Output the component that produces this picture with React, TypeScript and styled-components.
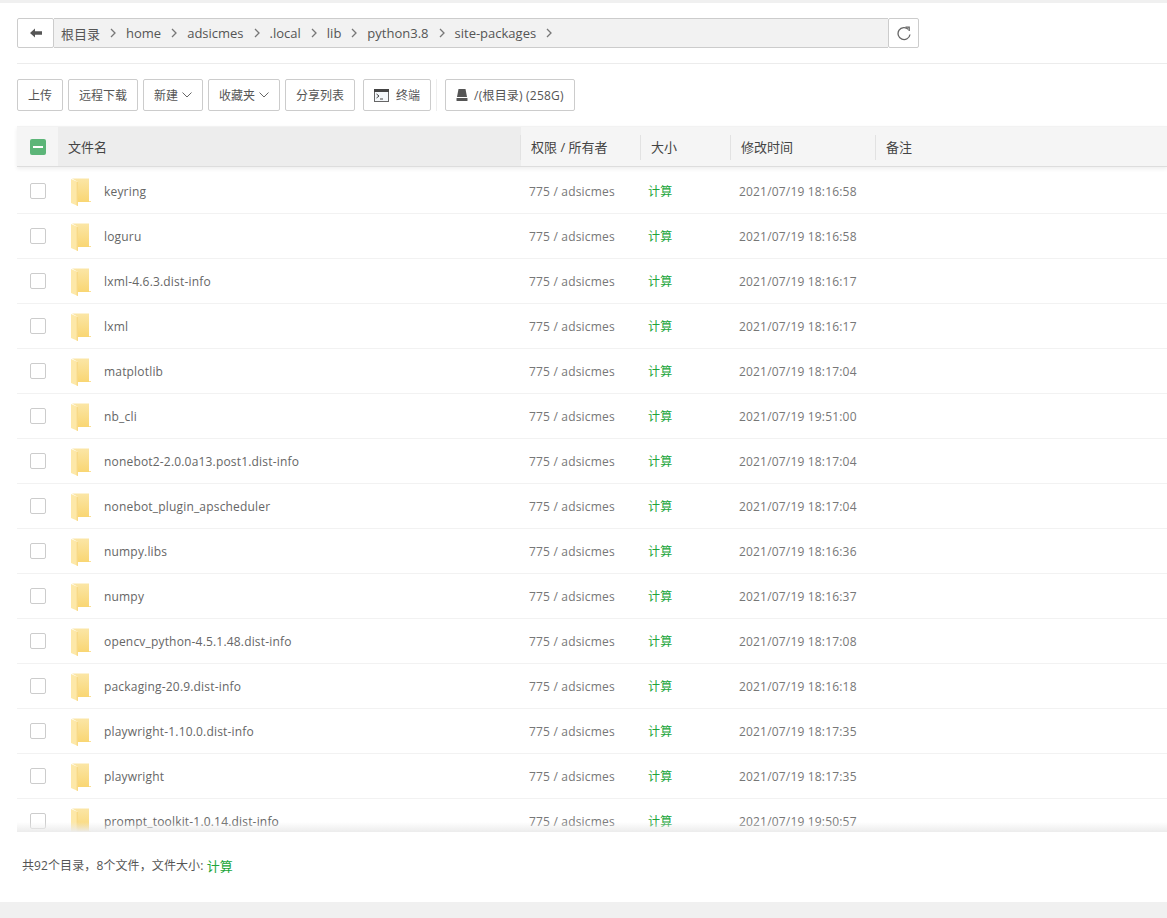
import React from "react";
import styled, { createGlobalStyle } from "styled-components";

const pathParts = ["根目录", "home", "adsicmes", ".local", "lib", "python3.8", "site-packages"];

const files = [
  { name: "keyring", time: "2021/07/19 18:16:58" },
  { name: "loguru", time: "2021/07/19 18:16:58" },
  { name: "lxml-4.6.3.dist-info", time: "2021/07/19 18:16:17" },
  { name: "lxml", time: "2021/07/19 18:16:17" },
  { name: "matplotlib", time: "2021/07/19 18:17:04" },
  { name: "nb_cli", time: "2021/07/19 19:51:00" },
  { name: "nonebot2-2.0.0a13.post1.dist-info", time: "2021/07/19 18:17:04" },
  { name: "nonebot_plugin_apscheduler", time: "2021/07/19 18:17:04" },
  { name: "numpy.libs", time: "2021/07/19 18:16:36" },
  { name: "numpy", time: "2021/07/19 18:16:37" },
  { name: "opencv_python-4.5.1.48.dist-info", time: "2021/07/19 18:17:08" },
  { name: "packaging-20.9.dist-info", time: "2021/07/19 18:16:18" },
  { name: "playwright-1.10.0.dist-info", time: "2021/07/19 18:17:35" },
  { name: "playwright", time: "2021/07/19 18:17:35" },
  { name: "prompt_toolkit-1.0.14.dist-info", time: "2021/07/19 19:50:57" },
];

const GlobalStyle = createGlobalStyle`
  html, body {
    margin: 0;
    padding: 0;
    background: #fff;
  }
  body {
    font-family: "Open Sans", "Noto Sans CJK SC", sans-serif;
    font-size: 12px;
    color: #666;
  }
`;

function FolderIcon({ id }: { id: number }) {
  return (
    <svg width="20" height="28" viewBox="0 0 20 28">
      <defs>
        <linearGradient id={`folder-back-${id}`} x1="0" y1="0" x2="0" y2="1">
          <stop offset="0" stopColor="#fbe6a6" />
          <stop offset="1" stopColor="#f9d673" />
        </linearGradient>
      </defs>
      <path d="M1 0.5H18V23.2H20V24H7V4Z" fill={`url(#folder-back-${id})`} />
      <path d="M0 1L7 4V28L0 25Z" fill="#fde8a8" />
      <path d="M7 4V28L5.6 27.4V3.4Z" fill="#f8d987" />
    </svg>
  );
}

function BackIcon() {
  return (
    <svg width="12" height="10" viewBox="0 0 12 10">
      <path d="M0 5L5 0.5V3.2H12V6.8H5V9.5Z" fill="#555" />
    </svg>
  );
}

function RefreshIcon() {
  return (
    <svg width="14" height="15" viewBox="0 0 14 15" fill="none">
      <path d="M11.4 3.4A6 6 0 1 0 13 8.5" stroke="#666" strokeWidth="1.3" />
      <path d="M8.5 1.2H12.2V5" stroke="#666" strokeWidth="1.3" />
    </svg>
  );
}

function Chevron() {
  return (
    <svg width="6" height="10" viewBox="0 0 6 10" fill="none">
      <path d="M1 1L5 5L1 9" stroke="#777" strokeWidth="1.3" />
    </svg>
  );
}

function Caret() {
  return (
    <svg width="10" height="6" viewBox="0 0 10 6" fill="none">
      <path d="M0.5 0.5L5 5L9.5 0.5" stroke="#666" strokeWidth="1" />
    </svg>
  );
}

function TerminalIcon() {
  return (
    <svg width="15" height="13" viewBox="0 0 15 13" fill="none">
      <rect x="0.5" y="0.5" width="14" height="12" fill="#f4f7fa" stroke="#666" />
      <rect x="0" y="0" width="15" height="3" fill="#444" />
      <path d="M2.5 5L5 7L2.5 9" stroke="#444" />
      <path d="M6 10H9" stroke="#444" />
    </svg>
  );
}

function DiskIcon() {
  return (
    <svg width="12" height="12" viewBox="0 0 12 12">
      <path d="M2.5 0H9.5L11 8H1Z" fill="#555" />
      <rect x="0.5" y="9" width="11" height="3" rx="0.5" fill="#555" />
    </svg>
  );
}

function App() {
  return (
    <>
      <GlobalStyle />
      <Page>
        <Content>
          <NavBar>
            <NavButton $width={37}>
              <BackIcon />
            </NavButton>
            <PathBar>
              {pathParts.map((part) => (
                <PathItem key={part}>
                  {part}
                  <Chevron />
                </PathItem>
              ))}
            </PathBar>
            <NavButton $width={31}>
              <RefreshIcon />
            </NavButton>
          </NavBar>

          <Toolbar>
            <ToolButton>上传</ToolButton>
            <ToolButton>远程下载</ToolButton>
            <ToolButton $gap={4}>
              新建
              <Caret />
            </ToolButton>
            <ToolButton $gap={4}>
              收藏夹
              <Caret />
            </ToolButton>
            <ToolButton>分享列表</ToolButton>
            <TerminalButton>
              <TerminalIcon />
              终端
            </TerminalButton>
            <ToolDivider />
            <DiskButton>
              <DiskIcon />
              /(根目录) (258G)
            </DiskButton>
          </Toolbar>

          <TableHead>
            <HeadCheck>
              <MixedCheck />
            </HeadCheck>
            <HeadCell $active>文件名</HeadCell>
            <HeadCell>权限 / 所有者</HeadCell>
            <HeadCell>大小</HeadCell>
            <HeadCell>修改时间</HeadCell>
            <HeadCell $last>备注</HeadCell>
          </TableHead>

          <FileList>
            {files.map((file, i) => (
              <FileRow key={file.name}>
                <RowCheck>
                  <CheckBox />
                </RowCheck>
                <NameCell>
                  <FolderIcon id={i} />
                  <span>{file.name}</span>
                </NameCell>
                <Cell>775 / adsicmes</Cell>
                <SizeCell>计算</SizeCell>
                <Cell>{file.time}</Cell>
              </FileRow>
            ))}
          </FileList>

          <Footer>
            共92个目录，8个文件，文件大小: <FooterLink>计算</FooterLink>
          </Footer>
        </Content>
      </Page>
    </>
  );
}

export default App;

const Page = styled.div`
  height: 918px;
  overflow: hidden;
  box-sizing: border-box;
  background: #f0f0f0;
  padding: 3px 0 16px;
`;
const Content = styled.div`
  height: 899px;
  background: #fff;
  padding-left: 17px;
  overflow: hidden;
`;
const NavBar = styled.div`
  display: flex;
  width: 902px;
  height: 30px;
  margin-top: 15px;
`;
const NavButton = styled.div<{ $width: number }>`
  width: ${(p) => p.$width}px;
  flex: none;
  box-sizing: border-box;
  display: flex;
  align-items: center;
  justify-content: center;
  background: #fff;
  border: 1px solid #ccc;
  border-radius: 2px;
`;
const PathBar = styled.div`
  flex: 1;
  display: flex;
  align-items: center;
  box-sizing: border-box;
  padding-left: 7px;
  gap: 10px;
  background: #f2f2f2;
  border: solid #ccc;
  border-width: 1px 0;
  font-size: 13px;
  color: #555;
`;
const PathItem = styled.span`
  display: flex;
  align-items: center;
  gap: 10px;
`;
const Toolbar = styled.div`
  display: flex;
  align-items: center;
  gap: 5px;
  margin-top: 15px;
  padding-top: 15px;
  border-top: 1px solid #ececec;
`;
const ToolButton = styled.div<{ $gap?: number }>`
  height: 32px;
  box-sizing: border-box;
  display: flex;
  align-items: center;
  gap: ${(p) => p.$gap ?? 5}px;
  padding: 0 10px;
  border: 1px solid #ccc;
  border-radius: 2px;
  background: #fff;
  font-size: 12px;
  color: #555;
  white-space: nowrap;
`;
const TerminalButton = styled(ToolButton)`
  margin-left: 3px;
  gap: 7px;
`;
const DiskButton = styled(ToolButton)`
  margin-left: 3px;
  gap: 6px;
  letter-spacing: 0.2px;
`;
const ToolDivider = styled.div`
  width: 1px;
  height: 32px;
  background: #eee;
`;
const TableHead = styled.div`
  display: grid;
  grid-template-columns: 41px 463px 120px 90px 145px 1fr;
  height: 41px;
  margin-top: 15px;
  box-sizing: border-box;
  background: #f5f5f5;
  border-top: 1px solid #f2f2f2;
  border-bottom: 1px solid #ddd;
  box-shadow: 0 2px 4px rgba(0, 0, 0, 0.07);
  position: relative;
`;
const HeadCheck = styled.div`
  display: flex;
  align-items: center;
  justify-content: center;
`;
const MixedCheck = styled.div`
  width: 16px;
  height: 16px;
  border-radius: 2px;
  background: #5cb578;
  display: flex;
  align-items: center;
  justify-content: center;
  &::after {
    content: "";
    width: 10px;
    height: 2px;
    background: #fff;
  }
`;
const HeadCell = styled.div<{ $active?: boolean; $last?: boolean }>`
  display: flex;
  align-items: center;
  padding-left: 10px;
  font-size: 13px;
  color: #444;
  background: ${(p) => (p.$active ? "#ededed" : "transparent")};
  position: relative;
  &::after {
    content: "";
    display: ${(p) => (p.$last ? "none" : "block")};
    position: absolute;
    right: 0;
    top: 8px;
    bottom: 6px;
    width: 1px;
    background: #e2e2e2;
  }
`;
const FileList = styled.div`
  height: 663px;
  margin-top: 2px;
  overflow: hidden;
  position: relative;
  &::after {
    content: "";
    position: absolute;
    left: 0;
    right: 0;
    bottom: 0;
    height: 10px;
    background: linear-gradient(to bottom, rgba(235, 235, 235, 0), #ececec);
  }
`;
const FileRow = styled.div`
  display: grid;
  grid-template-columns: 41px 463px 120px 90px 145px 1fr;
  height: 45px;
  box-sizing: border-box;
  border-bottom: 1px solid #f2f2f2;
  align-items: center;
`;
const RowCheck = styled.div`
  display: flex;
  justify-content: center;
`;
const CheckBox = styled.div`
  width: 16px;
  height: 16px;
  box-sizing: border-box;
  border: 1px solid #ccc;
  border-radius: 2px;
  background: #fff;
`;
const NameCell = styled.div`
  display: flex;
  align-items: center;
  gap: 13px;
  padding-left: 13px;
  font-size: 12px;
  letter-spacing: 0.18px;
  color: #666;
  svg {
    margin-top: 2px;
  }
`;
const Cell = styled.div`
  padding-left: 8px;
  font-size: 12px;
  letter-spacing: 0.18px;
  color: #777;
`;
const SizeCell = styled(Cell)`
  padding-left: 7px;
  color: #20a53a;
`;
const Footer = styled.div`
  height: 70px;
  padding: 0 0 4px 5px;
  box-sizing: border-box;
  display: flex;
  align-items: center;
  white-space: pre;
  font-size: 12px;
  letter-spacing: 0.1px;
  color: #555;
  background: #fff;
`;
const FooterLink = styled.span`
  font-size: 13px;
  color: #20a53a;
`;
